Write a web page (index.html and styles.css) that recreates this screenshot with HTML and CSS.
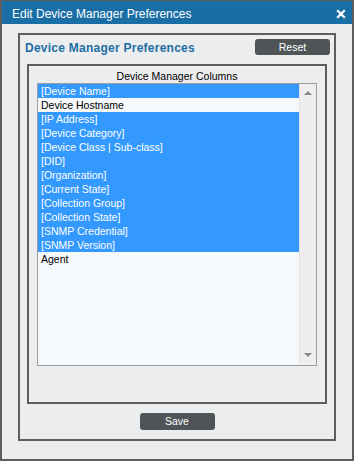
FILE: index.html
```html
<!DOCTYPE html>
<html>
<head>
<meta charset="utf-8">
<link rel="stylesheet" href="styles.css">
</head>
<body>
<div class="window">
  <div class="titlebar">
    <span class="title">Edit Device Manager Preferences</span>
    <svg class="close" width="10" height="10" viewBox="0 0 10 10"><path d="M1.2 1.2 L8.8 8.8 M8.8 1.2 L1.2 8.8" stroke="#fff" stroke-width="2.2" fill="none"/></svg>
  </div>
  <div class="content">
    <div class="panel">
      <div class="panel-head">
        <h1 class="panel-title">Device Manager Preferences</h1>
        <button class="btn reset">Reset</button>
      </div>
      <div class="columns-box">
        <div class="columns-label">Device Manager Columns</div>
        <div class="listbox">
          <ul class="items">
            <li class="item sel">[Device Name]</li>
            <li class="item">Device Hostname</li>
            <li class="item sel">[IP Address]</li>
            <li class="item sel">[Device Category]</li>
            <li class="item sel">[Device Class | Sub-class]</li>
            <li class="item sel">[DID]</li>
            <li class="item sel">[Organization]</li>
            <li class="item sel">[Current State]</li>
            <li class="item sel">[Collection Group]</li>
            <li class="item sel">[Collection State]</li>
            <li class="item sel">[SNMP Credential]</li>
            <li class="item sel">[SNMP Version]</li>
            <li class="item">Agent</li>
          </ul>
          <div class="scrollbar">
            <span class="arrow up"></span>
            <span class="arrow down"></span>
          </div>
        </div>
      </div>
      <div class="actions">
        <button class="btn save">Save</button>
      </div>
    </div>
  </div>
</div>
</body>
</html>
```
FILE: styles.css
```css
html, body {
  margin: 0;
  padding: 0;
  background: #ecedef;
}
.window {
  width: 354px;
  height: 461px;
  box-sizing: border-box;
  border: 2px solid #5e5e5e;
  border-top-width: 1px;
  background: #ecedef;
  font-family: "Liberation Sans", Arial, sans-serif;
}
.titlebar {
  height: 23px;
  background: #1a6ea6;
  display: flex;
  align-items: center;
  justify-content: space-between;
  padding: 0 6px 0 10px;
}
.title {
  color: #fff;
  font-size: 12px;
  padding-top: 2px;
}
.close {
  display: block;
  margin-top: 3px;
}
.content {
  padding: 9px 16px 0 16px;
}
.panel {
  border: 2px solid #5e5e5e;
  padding: 4px 7px 9px 7px;
}
.panel-head {
  display: flex;
  justify-content: space-between;
  align-items: center;
  height: 16px;
  margin: 0 -3px 0 -2px;
}
.panel-title {
  margin: 0;
  font-size: 12px;
  font-weight: bold;
  letter-spacing: 0.25px;
  color: #1c6ea4;
  padding-top: 2px;
}
.btn {
  width: 75px;
  height: 16px;
  border: none;
  border-radius: 3px;
  background: #4f5557;
  color: #fff;
  font-family: "Liberation Sans", Arial, sans-serif;
  font-size: 10.5px;
  padding: 0;
  line-height: 16px;
}
.save {
  height: 17px;
  line-height: 17px;
}
.columns-box {
  margin-top: 9px;
  border: 2px solid #5e5e5e;
  padding: 4px 8px 36px 8px;
}
.columns-label {
  height: 13px;
  line-height: 13px;
  text-align: center;
  font-size: 10.5px;
  color: #000;
}
.listbox {
  display: flex;
  height: 283px;
  box-sizing: border-box;
  border: 1px solid #9d9d9d;
  background: #f5f9fb;
}
.items {
  list-style: none;
  margin: 0;
  padding: 0;
  flex: 1;
}
.item {
  height: 14px;
  line-height: 14px;
  font-size: 10.5px;
  padding-left: 3px;
  color: #000;
  white-space: nowrap;
}
.item.sel {
  background: #3399ff;
  color: #fff;
}
.scrollbar {
  width: 16px;
  background: #eeeeee;
  border-left: 1px solid #e4e4e4;
  display: flex;
  flex-direction: column;
  justify-content: space-between;
  align-items: center;
  padding: 7px 0 8px 0;
}
.arrow {
  width: 0;
  height: 0;
  border-left: 4px solid transparent;
  border-right: 4px solid transparent;
}
.arrow.up {
  border-bottom: 4px solid #8a8a8a;
}
.arrow.down {
  border-top: 4px solid #8a8a8a;
}
.actions {
  display: flex;
  justify-content: center;
  margin-top: 9px;
}
```
